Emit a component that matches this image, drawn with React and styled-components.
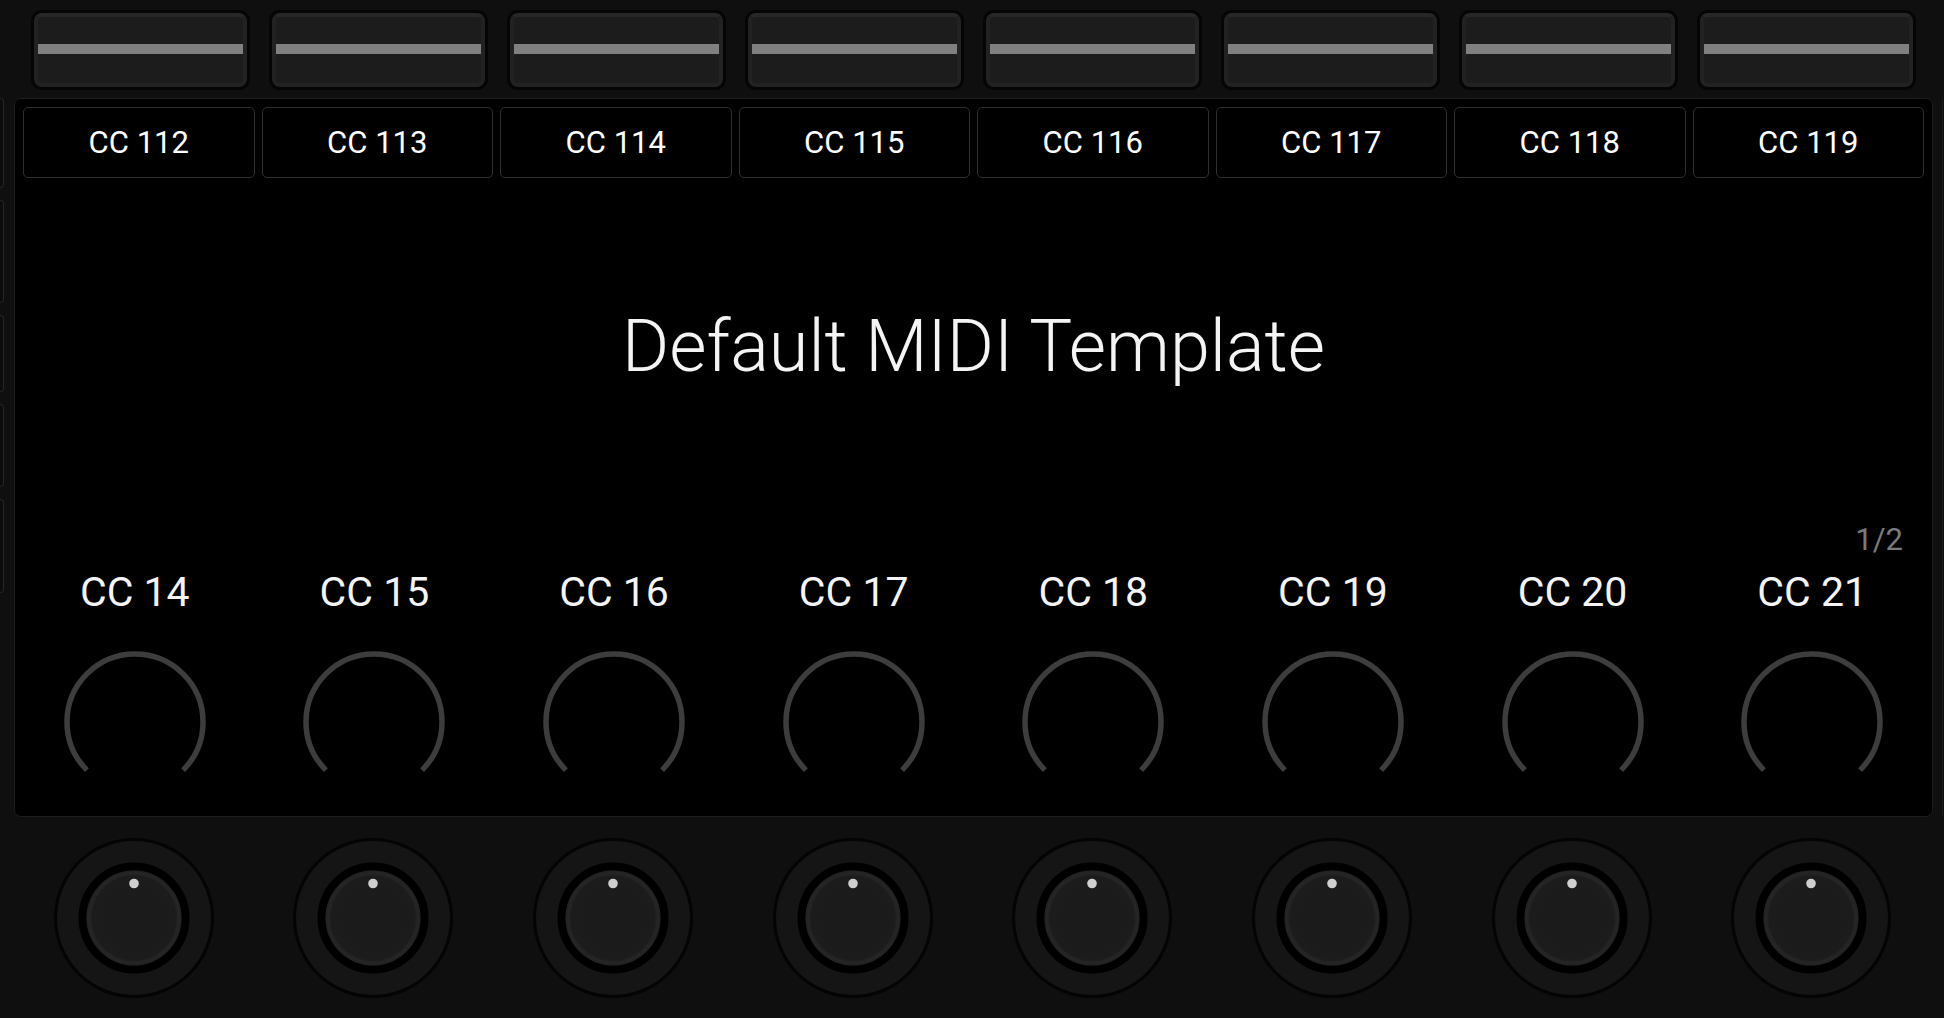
import React from 'react';
import styled, { createGlobalStyle } from 'styled-components';

const GlobalStyle = createGlobalStyle`
  html, body {
    margin: 0;
    padding: 0;
    background: #0f0f0f;
  }
  body {
    width: 1944px;
    height: 1018px;
    overflow: hidden;
    font-family: Roboto, "Noto Sans", "Liberation Sans", sans-serif;
  }
`;

const buttonCcs = [112, 113, 114, 115, 116, 117, 118, 119];
const knobCcs = [14, 15, 16, 17, 18, 19, 20, 21];
const railStubs = [90, 103, 77, 83, 94];

const Screen = styled.div`
  width: 1944px;
  height: 1018px;
  display: flex;
  flex-direction: column;
  background: #0f0f0f;
`;

const ButtonRow = styled.div`
  display: grid;
  grid-template-columns: repeat(8, 219px);
  gap: 19px;
  height: 98px;
  padding: 10px 0 0 31px;
  box-sizing: border-box;
`;

const ButtonFrame = styled.div`
  height: 80px;
  padding: 3px;
  box-sizing: border-box;
  background: #050505;
  border-radius: 11px;
`;

const ButtonCap = styled.div`
  height: 100%;
  box-sizing: border-box;
  display: flex;
  align-items: center;
  background: #1c1c1c;
  border: 4px solid #222222;
  border-top-color: #272727;
  border-radius: 8px;
`;

const ButtonBar = styled.div`
  flex: 1;
  height: 10px;
  margin-top: -3px;
  background: #808080;
`;

const Middle = styled.div`
  display: flex;
  height: 719px;
`;

const LeftRail = styled.div`
  width: 14px;
  display: flex;
  flex-direction: column;
  gap: 12px;
`;

const RailStub = styled.div`
  width: 4px;
  height: ${p => p.$h}px;
  box-sizing: border-box;
  background: #0c0c0c;
  border: 1px solid #262626;
  border-left: none;
  border-radius: 0 5px 5px 0;
`;

const RightRail = styled.div`
  flex: 1;
  padding-left: 9px;
`;

const RightStub = styled.div`
  height: 100%;
  border-left: 1px solid #1c1c1c;
  border-top-left-radius: 5px;
`;

const Panel = styled.div`
  width: 1919px;
  height: 719px;
  box-sizing: border-box;
  display: flex;
  flex-direction: column;
  background: #000;
  border: 1px solid #1c1c1c;
  border-radius: 7px;
`;

const LabelRow = styled.div`
  display: grid;
  grid-template-columns: repeat(8, 1fr);
  gap: 7px;
  padding: 8px 8px 0;
`;

const LabelBox = styled.div`
  height: 71px;
  box-sizing: border-box;
  display: flex;
  align-items: center;
  justify-content: center;
  border: 1px solid #2e2e2e;
  border-radius: 5px;
  color: #ffffff;
  font-size: 31px;
`;

const Title = styled.div`
  margin-top: 133px;
  text-align: center;
  color: #f4f4f4;
  font-size: 72px;
  line-height: 72px;
  font-weight: 300;
`;

const PageIndicator = styled.div`
  margin-top: 141px;
  padding-right: 29px;
  text-align: right;
  color: #7a7a7a;
  font-size: 31px;
  line-height: 31px;
`;

const KnobRow = styled.div`
  display: grid;
  grid-template-columns: repeat(8, 1fr);
  margin-top: 17px;
`;

const KnobColumn = styled.div`
  display: flex;
  flex-direction: column;
  align-items: center;
`;

const KnobLabel = styled.div`
  color: #f4f4f4;
  font-size: 41px;
  line-height: 41px;
`;

const ArcSvg = styled.svg`
  display: block;
  margin-top: 34px;
`;

const HardwareRow = styled.div`
  flex: 1;
  display: grid;
  grid-template-columns: repeat(8, 1fr);
  align-items: center;
  width: 1917px;
  padding-left: 14px;
`;

const HardwareCell = styled.div`
  display: flex;
  justify-content: center;
`;

const ArcKnob = () => (
  <ArcSvg width="150" height="150" viewBox="0 0 150 150">
    <path
      d="M 26.92 123.08 A 68 68 0 1 1 123.08 123.08"
      fill="none"
      stroke="#3d3d3d"
      strokeWidth="5.5"
    />
  </ArcSvg>
);

const HardwareKnob = ({ id }) => (
  <svg width="164" height="164" viewBox="0 0 164 164">
    <defs>
      <radialGradient id={`cap-${id}`} cx="0.5" cy="0.5" r="0.5">
        <stop offset="0" stopColor="#1b1b1b" />
        <stop offset="0.88" stopColor="#1c1c1c" />
        <stop offset="0.94" stopColor="#262626" />
        <stop offset="1" stopColor="#212121" />
      </radialGradient>
    </defs>
    <circle cx="82" cy="82" r="78.5" fill="#151515" stroke="#040404" strokeWidth="3" />
    <circle cx="82" cy="82" r="51.5" fill="none" stroke="#000" strokeWidth="8" />
    <circle cx="82" cy="82" r="47.5" fill={`url(#cap-${id})`} />
    <circle cx="82" cy="47.5" r="4.8" fill="#cfcfcf" />
  </svg>
);

export default function App() {
  return (
    <>
      <GlobalStyle />
      <Screen>
        <ButtonRow>
          {buttonCcs.map(cc => (
            <ButtonFrame key={cc}>
              <ButtonCap>
                <ButtonBar />
              </ButtonCap>
            </ButtonFrame>
          ))}
        </ButtonRow>
        <Middle>
          <LeftRail>
            {railStubs.map((h, i) => (
              <RailStub key={i} $h={h} />
            ))}
          </LeftRail>
          <Panel>
            <LabelRow>
              {buttonCcs.map(cc => (
                <LabelBox key={cc}>CC {cc}</LabelBox>
              ))}
            </LabelRow>
            <Title>Default MIDI Template</Title>
            <PageIndicator>1/2</PageIndicator>
            <KnobRow>
              {knobCcs.map(cc => (
                <KnobColumn key={cc}>
                  <KnobLabel>CC {cc}</KnobLabel>
                  <ArcKnob />
                </KnobColumn>
              ))}
            </KnobRow>
          </Panel>
          <RightRail>
            <RightStub />
          </RightRail>
        </Middle>
        <HardwareRow>
          {knobCcs.map(cc => (
            <HardwareCell key={cc}>
              <HardwareKnob id={cc} />
            </HardwareCell>
          ))}
        </HardwareRow>
      </Screen>
    </>
  );
}
